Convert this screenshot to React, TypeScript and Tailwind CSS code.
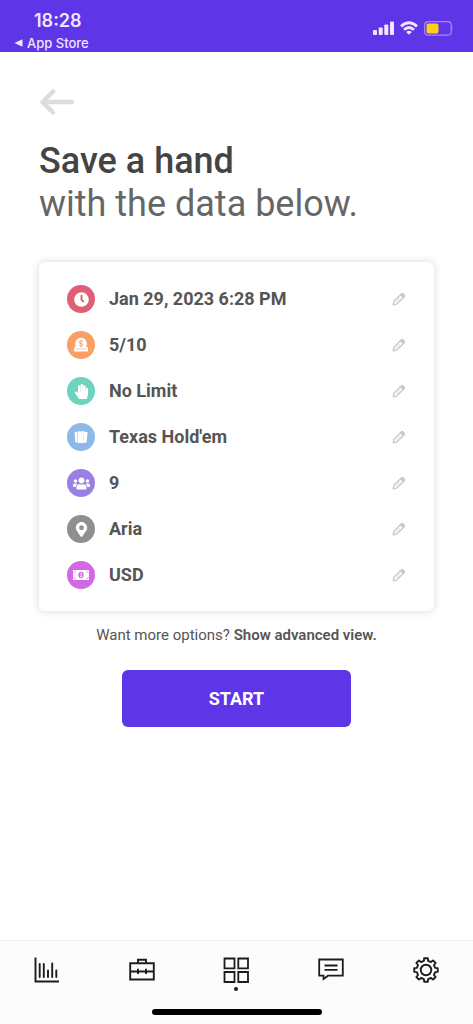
import React from 'react';
import { FaClock, FaHandPaper, FaUsers, FaMapMarkerAlt } from 'react-icons/fa';

const CoinIcon = () => (
  <svg viewBox="0 0 16 16" className="w-4 h-4">
    <path d="M3 9.500H1.800L1 12H15L14.200 9.500H13" fill="#fff" />
    <rect x="1" y="12" width="14" height="2.500" rx="0.500" fill="#fff" />
    <circle cx="8" cy="6.500" r="5.800" fill="#fff" />
    <path d="M10 4.700C9.600 3.900 8.800 3.800 8 3.800C6.900 3.800 6.100 4.300 6.100 5.100C6.100 7 10 5.900 10 7.900C10 8.800 9.100 9.200 8 9.200C7 9.200 6.300 8.900 6 8.200M8 2.900V10.100" fill="none" stroke="#f79f63" strokeWidth="0.900" />
    <path d="M3 12H13" stroke="#f79f63" strokeWidth="0.600" />
  </svg>
);

const CardsIcon = () => (
  <svg viewBox="0 0 16 16" className="w-4 h-4">
    <path d="M1.500 3.200L4.500 2.500V13.700L2.300 13.200Z" fill="#fff" />
    <path d="M5 2.300H10.500V14H5Z" fill="#fff" />
    <path d="M10 2.300L14.600 3.300L13.500 13.500L10 14Z" fill="#fff" />
    <path d="M10.600 3.500V12" stroke="#8db9e8" strokeWidth="0.300" />
  </svg>
);

const BillIcon = () => (
  <svg viewBox="0 0 18 12" className="w-[18px] h-3">
    <rect x="1" y="1" width="16" height="10" fill="#fff" />
    <ellipse cx="9" cy="6" rx="2.600" ry="3.200" fill="#d268e4" />
    <path d="M8.300 4.800L9.200 4.300V7.700M8.200 7.700H10.200" fill="none" stroke="#fff" strokeWidth="0.900" />
    <path d="M1.500 3.500A2 2 0 0 0 3.500 1.500M14.500 1.500A2 2 0 0 0 16.500 3.500M1.500 8.500A2 2 0 0 1 3.500 10.500M14.500 10.500A2 2 0 0 1 16.500 8.500" fill="none" stroke="#d268e4" strokeWidth="0.600" />
  </svg>
);

const PencilIcon = () => (
  <svg viewBox="0 0 14 14" className="w-[14px] h-[14px]" fill="none" stroke="#c9c9c9" strokeLinejoin="round">
    <path d="M1.300 12.700L1.900 9.300L9.300 1.900Q10.200 1.100 11.100 1.900L12.100 2.900Q12.900 3.800 12.100 4.700L4.700 12.100Z" strokeWidth="1.400" />
    <path d="M8.300 2.900L11.100 5.700L12.300 4.300L9.800 1.700Z" fill="#c9c9c9" strokeWidth="1" />
    <path d="M4.300 9.700L8.300 5.700" strokeWidth="0.700" />
  </svg>
);

const ChartIcon = () => (
  <svg viewBox="0 0 26 26" className="w-[26px] h-[26px]" fill="none" stroke="#1c1c1c" strokeWidth="1.900">
    <path d="M1.500 0.500V24.500H25" />
    <path d="M5.700 7V20M9.800 7V20M14 13.500V20M18.200 6.500V20M22.300 13.500V20" strokeLinecap="round" />
  </svg>
);

const BriefcaseIcon = () => (
  <svg viewBox="0 0 26 26" className="w-[26px] h-[26px]" fill="none" stroke="#1c1c1c" strokeWidth="1.900">
    <path d="M1.200 6.300H24.800V22.500H1.200ZM1.200 14.500H24.800M9 11.800V17M17 11.800V17" />
    <path d="M9 6.300V2.800H17V6.300" />
  </svg>
);

const GridIcon = () => (
  <svg viewBox="0 0 26 26" className="w-[26px] h-[26px]" fill="none" stroke="#1c1c1c" strokeWidth="1.800">
    <path d="M1.500 1.500H11.500V11.300H1.500ZM15.300 1.500H25V11.300H15.300ZM1.500 15H11.500V25H1.500ZM15.300 15H25V25H15.300Z" />
  </svg>
);

const ChatIcon = () => (
  <svg viewBox="0 0 26 26" className="w-[26px] h-[26px]" fill="none" stroke="#1c1c1c" strokeWidth="1.800">
    <path d="M1.200 2.500H24.800V18.700H10L5.500 22V18.700H1.200Z" />
    <path d="M6.500 8.500H19.500M6.500 12.800H19.500" />
  </svg>
);

// eight flat teeth around a ring, four corner points per tooth
const gearPoints = Array.from({ length: 8 }, (_, i) =>
  [[-13, 9.4], [-9, 11.9], [9, 11.9], [13, 9.4]].map(([deg, r]) => {
    const a = ((i * 45 + deg) * Math.PI) / 180;
    return `${(13 + r * Math.sin(a)).toFixed(2)},${(13 - r * Math.cos(a)).toFixed(2)}`;
  }).join(' ')
).join(' ');

const GearIcon = () => (
  <svg viewBox="0 0 26 26" className="w-[26px] h-[26px]" fill="none" stroke="#1c1c1c" strokeWidth="1.900" strokeLinejoin="round">
    <polygon points={gearPoints} />
    <circle cx="13" cy="13" r="5.300" />
  </svg>
);

const rows = [
  { label: 'Date', value: 'Jan 29, 2023 6:28 PM', color: 'bg-[#df5f74]', icon: <FaClock className="w-[15px] h-[15px]" /> },
  { label: 'Blinds', value: '5/10', color: 'bg-[#f9a064]', icon: <CoinIcon /> },
  { label: 'Limit', value: 'No Limit', color: 'bg-[#6dd3bd]', icon: <FaHandPaper className="w-[15px] h-[15px]" /> },
  { label: 'Game', value: "Texas Hold'em", color: 'bg-[#8db9e8]', icon: <CardsIcon /> },
  { label: 'Players', value: '9', color: 'bg-[#9a80e5]', icon: <FaUsers className="w-[17px] h-[17px]" /> },
  { label: 'Location', value: 'Aria', color: 'bg-[#8f8f8f]', icon: <FaMapMarkerAlt className="w-[15px] h-[15px]" /> },
  { label: 'Currency', value: 'USD', color: 'bg-[#d268e4]', icon: <BillIcon /> },
];

const tabs = [
  { name: 'Statistics', icon: <ChartIcon /> },
  { name: 'Bankroll', icon: <BriefcaseIcon /> },
  { name: 'Home', icon: <GridIcon />, active: true },
  { name: 'Messages', icon: <ChatIcon /> },
  { name: 'Settings', icon: <GearIcon /> },
];

const StatusBar = () => (
  <div className="bg-[#5f35e8] text-[#f1e6ff] flex justify-between h-[52px] pl-[14px] pr-[19px] font-['Inter',sans-serif]">
    <div className="pt-[11px]">
      <div className="pl-5 text-lg leading-5 font-semibold">18:28</div>
      <a href="#" className="mt-1 flex items-center gap-1 text-[13px] leading-4 font-medium">
        <svg viewBox="0 0 9 8" className="w-[9px] h-2" fill="currentColor"><path d="M0.500 4L8.500 0.300V7.700Z" /></svg>
        App Store
      </a>
    </div>
    <div className="flex items-center gap-[6px] h-14">
      <svg viewBox="0 0 21 14" className="w-[21px] h-[14px]" fill="currentColor">
        <rect x="0" y="9" width="4" height="5" rx="1" />
        <rect x="5.700" y="6.500" width="4" height="7.500" rx="1" />
        <rect x="11.300" y="3.500" width="4" height="10.500" rx="1" />
        <rect x="17" y="0.500" width="4" height="13.500" rx="1" />
      </svg>
      <svg viewBox="0 0 18 14" className="w-[18px] h-[14px]" fill="none" stroke="currentColor" strokeWidth="2.800">
        <path d="M1 5.400Q9 -2 17 5.400" />
        <path d="M4 8.800Q9 4.200 14 8.800" />
        <path d="M9 13.700L6.200 11Q9 8.700 11.800 11Z" fill="currentColor" stroke="none" />
      </svg>
      <svg viewBox="0 0 30 15" className="w-[30px] h-[15px]" fill="none">
        <rect x="0.700" y="0.700" width="26.500" height="13.500" rx="3.500" stroke="#a58af3" strokeWidth="1.200" />
        <rect x="2.500" y="2.500" width="12" height="10" rx="2" fill="#ffd016" />
        <path d="M28.500 5.300Q30 7.500 28.500 9.700Z" fill="#a58af3" />
      </svg>
    </div>
  </div>
);

const App: React.FC = () => {
  return (
    <div className="min-h-screen flex flex-col bg-white text-[#555] font-['Roboto',sans-serif]">
      <StatusBar />

      <main className="flex-1 px-[39px] pt-9">
        <button aria-label="Back" className="block">
          <svg viewBox="0 0 36 28" className="w-9 h-7" fill="none" stroke="#dcdcdc" strokeWidth="4.500" strokeLinecap="round" strokeLinejoin="round">
            <path d="M14 3.500L3.500 14L14 24.500M3.500 14H33" />
          </svg>
        </button>

        <h1 className="mt-6 text-4xl leading-[43px] text-[#666]">
          <span className="block font-medium text-[#444]">Save a hand</span>
          with the data below.
        </h1>

        <ul className="mt-9 flex flex-col gap-[18px] rounded-md bg-white px-7 pt-[23px] pb-[22px] shadow-[0_0_8px_rgba(0,0,0,0.16)]">
          {rows.map(row => (
            <li key={row.label} className="flex items-center h-7">
              <span className={`w-7 h-7 rounded-full flex items-center justify-center text-white ${row.color}`}>
                {row.icon}
              </span>
              <span className="ml-[14px] flex-1 text-lg font-bold">{row.value}</span>
              <button aria-label={`Edit ${row.label}`}>
                <PencilIcon />
              </button>
            </li>
          ))}
        </ul>

        <p className="mt-[14px] text-center text-[15px] leading-5">
          Want more options? <a href="#" className="font-semibold">Show advanced view.</a>
        </p>

        <button className="mt-[25px] mx-auto block w-[229px] h-[57px] rounded-md bg-[#5f35e8] text-lg font-bold text-white">
          START
        </button>
      </main>

      <footer className="bg-[#fcfcfc] border-t border-[#f0f0f0] pt-4 pb-[9px]">
        <nav className="flex">
          {tabs.map(tab => (
            <button key={tab.name} aria-label={tab.name} className="flex-1 flex flex-col items-center gap-1 h-9">
              {tab.icon}
              {tab.active && <span className="w-1 h-1 rounded-full bg-[#1c1c1c]"></span>}
            </button>
          ))}
        </nav>
        <div className="mt-4 mx-auto w-[170px] h-[6px] rounded-full bg-black"></div>
      </footer>
    </div>
  );
};

export default App;
